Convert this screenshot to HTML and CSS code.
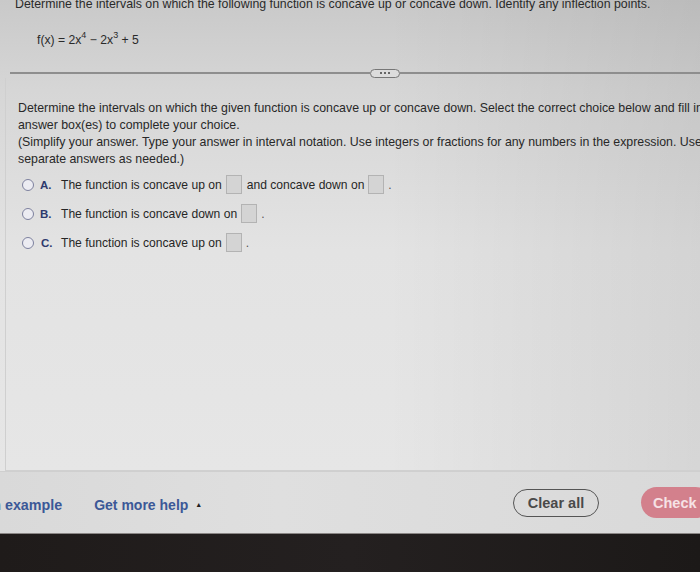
FILE: index.html
```html
<!DOCTYPE html>
<html>
<head>
<meta charset="utf-8">
<link rel="stylesheet" href="styles.css">
</head>
<body>
<div class="page">
  <div class="question">Determine the intervals on which the following function is concave up or concave down. Identify any inflection points.</div>
  <div class="formula">f(x) = 2x<sup>4</sup> &minus; 2x<sup>3</sup> + 5</div>
  <div class="divider">
    <div class="rule rule-left"></div>
    <div class="more"><span></span><span></span><span></span></div>
    <div class="rule rule-right"></div>
  </div>
  <div class="panel">
    <div class="instructions">
      <p class="lead">Determine the intervals on which the given function is concave up or concave down. Select the correct choice below and fill in the answer box(es) to complete your choice.</p>
      <p class="note">(Simplify your answer. Type your answer in interval notation. Use integers or fractions for any numbers in the expression. Use a comma to separate answers as needed.)</p>
    </div>
    <div class="options">
      <div class="option"><span class="radio"></span><span class="letter">A.</span><span class="otext">The function is concave up on</span><span class="box"></span><span class="otext">and concave down on</span><span class="box"></span><span class="dot">.</span></div>
      <div class="option"><span class="radio"></span><span class="letter">B.</span><span class="otext">The function is concave down on</span><span class="box"></span><span class="dot">.</span></div>
      <div class="option"><span class="radio"></span><span class="letter">C.</span><span class="otext">The function is concave up on</span><span class="box"></span><span class="dot">.</span></div>
    </div>
  </div>
  <div class="toolbar">
    <span class="link example">View an example</span>
    <span class="link help">Get more help <span class="caret">&#9650;</span></span>
    <span class="spacer"></span>
    <span class="btn clear">Clear all</span>
    <span class="btn check">Check</span>
  </div>
  <div class="darkbar"></div>
</div>
</body>
</html>
```

FILE: styles.css
```css
html, body {
  margin: 0;
  padding: 0;
}
body {
  font-family: "Liberation Sans", Arial, sans-serif;
  color: #262626;
  overflow: hidden;
}
.page {
  width: 700px;
  height: 572px;
  display: flex;
  flex-direction: column;
  overflow: hidden;
  background:
    linear-gradient(to right, rgba(255,255,255,0) 55%, rgba(0,0,0,0.07) 100%),
    linear-gradient(#c9c9c9 0px, #d6d6d6 90px, #e3e3e3 250px, #e6e6e6 470px);
}
.question {
  font-size: 12.35px;
  line-height: 16px;
  margin-top: -4px;
  padding-left: 15px;
  white-space: nowrap;
  color: #2a2a2a;
}
.formula {
  font-size: 12.2px;
  line-height: 16px;
  margin-top: 20px;
  padding-left: 37px;
  color: #2a2a2a;
}
.formula sup {
  font-size: 9px;
  line-height: 0;
  vertical-align: 6px;
}
.divider {
  display: flex;
  align-items: center;
  height: 10px;
  margin-top: 20px;
  padding-left: 10px;
}
.rule {
  height: 2px;
  background: #8e8e8e;
}
.rule-left {
  width: 360px;
}
.rule-right {
  flex: 1;
}
.more {
  width: 28px;
  height: 7px;
  border: 1.5px solid #777;
  border-radius: 5px;
  display: flex;
  align-items: center;
  justify-content: center;
  gap: 2px;
  background: #dcdcdc;
}
.more span {
  width: 2px;
  height: 2px;
  background: #666;
}
.panel {
  flex: 1;
  border-left: 1px solid #cfcfcf;
  margin-left: 5px;
  padding: 22px 0 0 12px;
  border-bottom: 1px solid #d0d0d0;
}
.instructions p {
  margin: 0;
  font-size: 12.35px;
  line-height: 17px;
  color: #282828;
}
.instructions .lead {
  width: 735px;
}
.instructions .note {
  width: 760px;
}
.options {
  margin-top: 2px;
  display: flex;
  flex-direction: column;
}
.option {
  height: 29px;
  display: flex;
  align-items: center;
  padding-left: 4px;
  font-size: 12.1px;
  color: #262626;
}
.radio {
  width: 10px;
  height: 10px;
  border: 1.5px solid #7d819e;
  border-radius: 50%;
  background: #ececf2;
  margin-right: 6px;
}
.letter {
  font-size: 11.5px;
  font-weight: bold;
  color: #2e3a6e;
  width: 21px;
}
.option:nth-child(3) .letter {
  margin-left: 1px;
  width: 20px;
}
.box {
  width: 16px;
  height: 19px;
  background: #d4d4d4;
  border: 1px solid #b3b3b3;
  margin: 0 4px 0 4px;
  box-sizing: border-box;
}
.box + .otext {
  margin-left: 1px;
}
.dot {
  color: #555;
}
.toolbar {
  height: 62px;
  display: flex;
  align-items: center;
  background: linear-gradient(to right, #d9d9d9, #dfdfdf 40%, #d9d9d9 100%);
  border-top: 1px solid #cfcfcf;
  box-sizing: border-box;
}
.link {
  font-size: 14.3px;
  font-weight: bold;
  color: #3b5897;
  white-space: nowrap;
  margin-top: 4px;
}
.example {
  margin-left: -52px;
}
.help {
  margin-left: 32px;
  font-size: 14px;
}
.caret {
  font-size: 7px;
  color: #222;
  vertical-align: 3px;
  margin-left: 3px;
}
.spacer {
  flex: 1;
}
.btn {
  height: 28px;
  box-sizing: border-box;
  border-radius: 14px;
  display: flex;
  align-items: center;
  justify-content: center;
  font-size: 14.5px;
  font-weight: bold;
}
.clear {
  width: 86px;
  border: 1.5px solid #555;
  color: #4a4a4a;
  margin-right: 42px;
}
.check {
  width: 70px;
  height: 31px;
  border-radius: 16px;
  background: #d3808c;
  color: #f6e2e5;
  margin-right: -11px;
  justify-content: flex-start;
  padding-left: 12px;
}
.darkbar {
  height: 39px;
  background: linear-gradient(to right, #1f1b1a, #242020 50%, #1c1918);
  border-top: 1px solid #8a8685;
  box-sizing: border-box;
}
```
